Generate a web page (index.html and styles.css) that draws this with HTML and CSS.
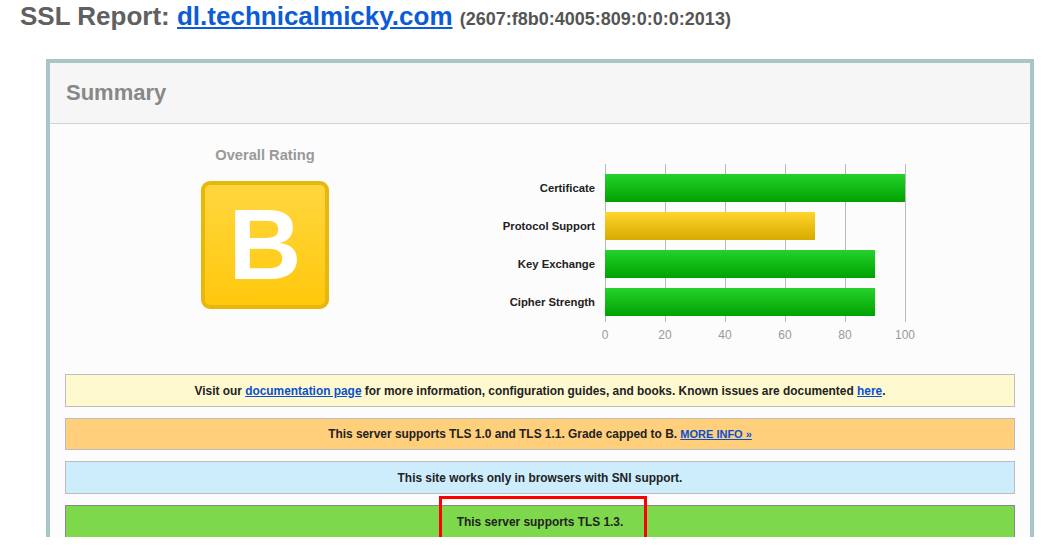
FILE: index.html
```html
<!DOCTYPE html>
<html lang="en">
<head>
<meta charset="utf-8">
<title>SSL Report: dl.technicalmicky.com</title>
<link rel="stylesheet" href="styles.css">
</head>
<body>
<div class="page">
  <h1 class="title">SSL Report: <a href="#" class="host">dl.technicalmicky.com</a> <span class="ip">(2607:f8b0:4005:809:0:0:0:2013)</span></h1>

  <div class="report">
    <div class="report-head">Summary</div>
    <div class="report-body">
      <div class="summary">
        <div class="rating">
          <div class="rating-title">Overall Rating</div>
          <div class="grade"><span>B</span></div>
        </div>
        <div class="chart">
          <div class="chart-labels">
            <div class="clabel">Certificate</div>
            <div class="clabel">Protocol Support</div>
            <div class="clabel">Key Exchange</div>
            <div class="clabel">Cipher Strength</div>
          </div>
          <div class="chart-main">
            <div class="plot">
              <div class="bar green" style="width:300px"></div>
              <div class="bar yellow" style="width:210px"></div>
              <div class="bar green" style="width:270px"></div>
              <div class="bar green" style="width:270px"></div>
            </div>
            <div class="axis">
              <span>0</span><span>20</span><span>40</span><span>60</span><span>80</span><span>100</span>
            </div>
          </div>
        </div>
      </div>

      <div class="notices">
        <div class="notice n-yellow">Visit our <a href="#">documentation page</a> for more information, configuration guides, and books. Known issues are documented <a href="#">here</a>.</div>
        <div class="notice n-orange">This server supports TLS 1.0 and TLS 1.1. Grade capped to B. <a href="#" class="more">MORE INFO &raquo;</a></div>
        <div class="notice n-blue">This site works only in browsers with SNI support.</div>
        <div class="notice n-green">This server supports TLS 1.3.<span class="highlight"></span></div>
      </div>
    </div>
  </div>
</div>
</body>
</html>
```

FILE: styles.css
```css
html, body {
  margin: 0;
  padding: 0;
  background: #ffffff;
}

body {
  font-family: "Liberation Sans", Arial, sans-serif;
  color: #222222;
}

.page {
  padding-left: 20px;
}

.title {
  margin: 0;
  height: 32px;
  font-size: 26px;
  line-height: 32px;
  font-weight: bold;
  color: #606060;
  white-space: nowrap;
}

.host {
  color: #0b5cd6;
  text-decoration: underline;
}

.ip {
  font-size: 18px;
  line-height: 18px;
  color: #555555;
}

.report {
  margin-top: 27px;
  margin-left: 26px;
  width: 980px;
  border: 4px solid #a9c5c8;
  border-bottom: none;
  background: #fcfcfc;
}

.report-head {
  height: 60px;
  line-height: 60px;
  padding-left: 16px;
  background: #f6f6f6;
  border-bottom: 1px solid #ccd5d5;
  font-size: 22px;
  font-weight: bold;
  color: #888888;
}

.report-body {
  padding: 0 15px 20px 15px;
  height: 413px;
  box-sizing: border-box;
}

.summary {
  display: flex;
  height: 218px;
}

.rating {
  width: 400px;
  padding-top: 23px;
  display: flex;
  flex-direction: column;
  align-items: center;
}

.rating-title {
  font-size: 14.7px;
  line-height: 16px;
  font-weight: bold;
  color: #999999;
  margin-bottom: 18px;
}

.grade {
  width: 128px;
  height: 128px;
  box-sizing: border-box;
  border: 4px solid #e8b70d;
  border-radius: 9px;
  background: linear-gradient(to bottom, #ffd63e, #ffc80c);
  display: flex;
  align-items: center;
  justify-content: center;
}

.grade span {
  font-size: 101px;
  line-height: 100px;
  font-weight: bold;
  color: #ffffff;
  margin-top: -2px;
}

.chart {
  display: flex;
  margin-top: 40px;
}

.chart-labels {
  width: 140px;
  padding-right: 10px;
  box-sizing: border-box;
  padding-top: 10px;
  display: flex;
  flex-direction: column;
  gap: 10px;
}

.clabel {
  height: 28px;
  line-height: 28px;
  text-align: right;
  font-size: 11.3px;
  font-weight: bold;
  color: #222222;
  white-space: nowrap;
}

.chart-main {
  width: 301px;
}

.plot {
  height: 158px;
  box-sizing: border-box;
  padding-top: 10px;
  display: flex;
  flex-direction: column;
  gap: 10px;
  background: repeating-linear-gradient(to right, #b9b9b9 0, #b9b9b9 1px, transparent 1px, transparent 60px);
}

.bar {
  height: 28px;
}

.bar.green {
  background: linear-gradient(to bottom, #25d22c, #00a200);
}

.bar.yellow {
  background: linear-gradient(to bottom, #ffd52b, #d9aa00);
}

.axis {
  display: flex;
  margin-left: -30px;
  margin-top: 6px;
}

.axis span {
  flex: 0 0 60px;
  text-align: center;
  font-size: 12px;
  line-height: 14px;
  color: #999999;
}

.notices {
  margin-top: 32px;
  display: flex;
  flex-direction: column;
  gap: 11px;
}

.notice {
  position: relative;
  border: 1px solid #bdbdbd;
  padding: 9px 10px 7px 10px;
  font-size: 11.9px;
  line-height: 15px;
  font-weight: bold;
  text-align: center;
  color: #222222;
}

.notice a {
  color: #0a4fd0;
  text-decoration: underline;
}

.notice a.more {
  font-size: 11px;
}

.n-yellow {
  background: #fff9d0;
}

.n-orange {
  background: #ffcf7b;
  padding-top: 8px;
  padding-bottom: 7px;
}

.n-blue {
  background: #cdedfd;
}

.n-green {
  background: #7ed84c;
  border-color: #888888;
}

.highlight {
  position: absolute;
  left: 373px;
  top: -10px;
  width: 208px;
  height: 47px;
  box-sizing: border-box;
  border: 3px solid #ff0000;
}
```
